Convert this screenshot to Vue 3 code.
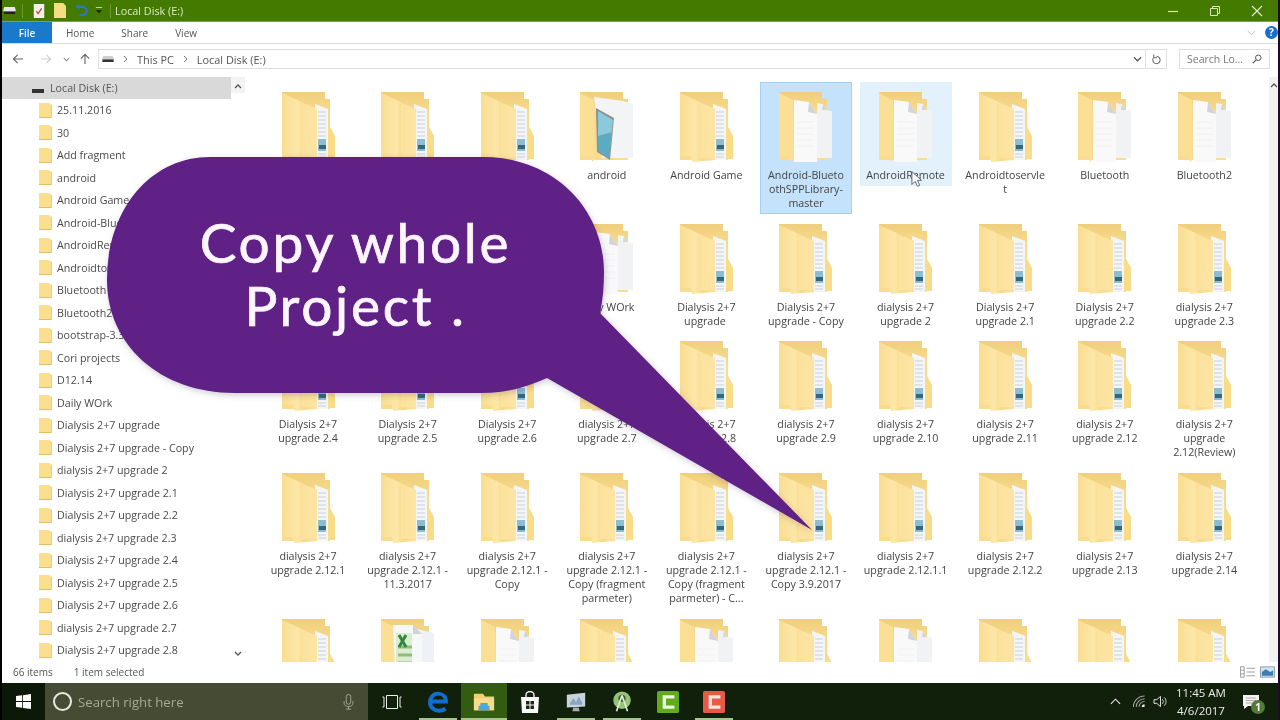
<script setup>
const navItems = ['25.11.2016','30','Add fragment','android','Android Game','Android-BluetoothSPPLibrary-master','AndroidRemote','Androidtoservlet','Bluetooth','Bluetooth2','bootstrap-3.3.7','Cori projects','D12.14','Daily WOrk','Dialysis 2+7 upgrade','Dialysis 2+7 upgrade - Copy','dialysis 2+7 upgrade 2','Dialysis 2+7 upgrade 2.1','Dialysis 2+7 upgrade 2.2','dialysis 2+7 upgrade 2.3','Dialysis 2+7 upgrade 2.4','Dialysis 2+7 upgrade 2.5','Dialysis 2+7 upgrade 2.6','dialysis 2+7 upgrade 2.7','Dialysis 2+7 upgrade 2.8']

const d = 'dialysis 2+7\nupgrade '
const D = 'Dialysis 2+7\nupgrade '
const files = [
  { n: '25.11.2016', i: 'plain' }, { n: '30', i: 'plain' }, { n: 'Add fragment', i: 'plain' },
  { n: 'android', i: 'android' }, { n: 'Android Game', i: 'plain' },
  { n: 'Android-Blueto\nothSPPLibrary-\nmaster', i: 'doc', s: 'selected' },
  { n: 'AndroidRemote', i: 'doc', s: 'hover' }, { n: 'Androidtoservle\nt', i: 'plain' },
  { n: 'Bluetooth', i: 'doc' }, { n: 'Bluetooth2', i: 'doc' },

  { n: 'bootstrap-3.3.7', i: 'plain' }, { n: 'Cori projects', i: 'plain' }, { n: 'D12.14', i: 'plain' },
  { n: 'Daily WOrk', i: 'doc' }, { n: D, i: 'plain' }, { n: D + '- Copy', i: 'plain' },
  { n: d + '2', i: 'plain' }, { n: D + '2.1', i: 'plain' }, { n: D + '2.2', i: 'plain' }, { n: d + '2.3', i: 'plain' },

  { n: D + '2.4', i: 'plain' }, { n: D + '2.5', i: 'plain' }, { n: D + '2.6', i: 'plain' },
  { n: d + '2.7', i: 'plain' }, { n: D + '2.8', i: 'plain' }, { n: d + '2.9', i: 'plain' },
  { n: d + '2.10', i: 'plain' }, { n: d + '2.11', i: 'plain' }, { n: d + '2.12', i: 'plain' },
  { n: 'dialysis 2+7\nupgrade\n2.12(Review)', i: 'plain' },

  { n: d + '2.12.1', i: 'plain' }, { n: d + '2.12.1 -\n11.3.2017', i: 'plain' },
  { n: d + '2.12.1 -\nCopy', i: 'plain' },
  { n: d + '2.12.1 -\nCopy (fragment\nparmeter)', i: 'plain' },
  { n: d + '2.12.1 -\nCopy (fragment\nparmeter) - C...', i: 'plain' },
  { n: d + '2.12.1 -\nCopy 3.9.2017', i: 'plain' },
  { n: d + '2.12.1.1', i: 'plain' }, { n: d + '2.12.2', i: 'plain' },
  { n: d + '2.13', i: 'plain' }, { n: d + '2.14', i: 'plain' },

  { n: '', i: 'plain' }, { n: '', i: 'excel' }, { n: '', i: 'doc' }, { n: '', i: 'plain' }, { n: '', i: 'doc' },
  { n: '', i: 'plain' }, { n: '', i: 'doc' }, { n: '', i: 'plain' }, { n: '', i: 'plain' }, { n: '', i: 'plain' }
]
</script>

<template>
  <div class="screen">
    <svg class="defs" width="0" height="0" aria-hidden="true">
      <defs>
        <linearGradient id="leaf" x1="0" y1="0" x2="1" y2="0">
          <stop offset="0" stop-color="#f9dd92" />
          <stop offset="0.45" stop-color="#fde7a8" />
          <stop offset="0.62" stop-color="#f7da8c" />
          <stop offset="1" stop-color="#fce29a" />
        </linearGradient>
        <linearGradient id="tab" x1="0" y1="0" x2="0" y2="1">
          <stop offset="0" stop-color="#efcf7c" />
          <stop offset="0.3" stop-color="#f8da8c" />
          <stop offset="1" stop-color="#f9dc90" />
        </linearGradient>
        <symbol id="folder-plain" viewBox="0 0 53 70">
          <path d="M0 0H43V7H48V68H0Z" fill="url(#tab)" />
          <path d="M46 31L53 44V67H46Z" fill="#f9dc88" />
          <path d="M33 12L46 17V68H33Z" fill="#f4f5f6" />
          <path d="M36 20H44M36 24H44M36 28H44M36 32H44M36 36H44M36 40H44M36 44H44M36 62H44M36 65H44" stroke="#c6d1d9" stroke-width="1.2" />
          <path d="M36 47H44V59H36Z" fill="#8dbdd0" />
          <path d="M37 53H44V57H37Z" fill="#35667c" />
          <path d="M0 1L35 17V68L12 70L11 64H0Z" fill="url(#leaf)" />
          <path d="M14 8L35 17V66H20V12Z" fill="#fde6a6" opacity="0.7" />
        </symbol>
        <symbol id="folder-doc" viewBox="0 0 53 70">
          <path d="M0 0H43V7H48V68H0Z" fill="url(#tab)" />
          <path d="M0 1L14 8V68L12 70L11 64H0Z" fill="#fadf95" />
          <path d="M38 11L44 12L47 18L53 19V66H38Z" fill="#f1f2f4" />
          <path d="M15 8L30 10L38 22V70H15Z" fill="#f9f9fa" />
          <path d="M30 10L38 22L29 20Z" fill="#d2d4d8" />
          <path d="M44 12L47 18H43Z" fill="#d2d4d8" />
          <path d="M18 30H35M18 36H35M18 42H35M18 48H35M18 54H35" stroke="#f0f0f1" />
        </symbol>
        <symbol id="folder-android" viewBox="0 0 53 70">
          <path d="M0 0H43V7H48V68H0Z" fill="url(#tab)" />
          <path d="M0 1L14 8V68L12 70L11 64H0Z" fill="#fadf95" />
          <path d="M14 5L43 9L53 12V66H22Z" fill="#f3f4f6" />
          <path d="M16 16L34 26L30 68L17 60Z" fill="#8f8f8f" />
          <path d="M18 19L33 28L29 66L18 58Z" fill="#8ccadb" />
          <path d="M18 44L32 40L29 66L18 58Z" fill="#5cabc0" />
        </symbol>
        <symbol id="folder-excel" viewBox="0 0 53 70">
          <path d="M0 0H43V7H48V68H0Z" fill="url(#tab)" />
          <path d="M0 1L14 8V68L12 70L11 64H0Z" fill="#fadf95" />
          <path d="M36 10L53 14V66H36Z" fill="#eef1f5" />
          <path d="M12 6L32 6L41 15V70H15Z" fill="#f6f7f7" />
          <path d="M32 6L41 15H32Z" fill="#cfd3d7" />
          <path d="M15 14H31V62H15Z" fill="#dcecd2" />
          <path d="M17 28H31M17 36H31M17 44H31" stroke="#8fbd7c" stroke-width="3" />
          <path d="M18 16L25 28M25 16L18 28" stroke="#2f8a3c" stroke-width="3" />
        </symbol>
      </defs>
    </svg>

    <header class="titlebar">
      <svg class="qa drive" viewBox="0 0 14 8"><path d="M1 0H13L14 3V8H0V3Z" fill="#e8e8e8" /><path d="M0 5H14V8H0Z" fill="#222" /></svg>
      <span class="qsep"></span>
      <svg class="qa check" viewBox="0 0 12 16"><path d="M0 0H12V16H0Z" fill="#f3f1e8" /><path d="M3 8L5 11L9 5" stroke="#d0413a" stroke-width="1.4" fill="none" /></svg>
      <svg class="qa mini-folder" viewBox="0 0 13 16"><path d="M0 0H10L13 3V16H0Z" fill="#f7dc86" /></svg>
      <svg class="qa undo" viewBox="0 0 14 14"><path d="M3 3H8A4.500 4.500 0 0 1 8 12H5" stroke="#2a78c7" stroke-width="2.500" fill="none" /><path d="M0 3L5 0V6Z" fill="#2a78c7" /></svg>
      <svg class="qa drop" viewBox="0 0 9 7"><path d="M1 0H8" stroke="#e6efd9" /><path d="M1 3H8L4.500 7Z" fill="#1b2a08" /></svg>
      <span class="qsep second"></span>
      <span class="title-text">Local Disk (E:)</span>
      <div class="winctl">
        <svg viewBox="0 0 12 12"><path d="M1 6.500H11" stroke="#cfe6b0" stroke-width="1.200" /></svg>
        <svg viewBox="0 0 12 12"><path d="M1.500 3.500H8.500V10.500H1.500ZM3.500 3.500V1.500H10.500V8.500H8.500" stroke="#d8e8c0" fill="none" /></svg>
        <svg viewBox="0 0 12 12"><path d="M1 1L11 11M11 1L1 11" stroke="#e4efd4" stroke-width="1.100" /></svg>
      </div>
    </header>

    <nav class="ribbon">
      <span class="tab file">File</span>
      <span class="tab home">Home</span>
      <span class="tab">Share</span>
      <span class="tab">View</span>
      <svg class="rib-chev" viewBox="0 0 10 6"><path d="M1 1L5 5L9 1" stroke="#b5b5b5" fill="none" /></svg>
      <span class="help">?</span>
    </nav>

    <div class="addressbar">
      <svg class="nav-arrow back" viewBox="0 0 14 12"><path d="M13 6H2M6.500 1L1.500 6L6.500 11" stroke="#666" stroke-width="1.400" fill="none" /></svg>
      <svg class="nav-arrow fwd" viewBox="0 0 14 12"><path d="M1 6H12M7.500 1L12.500 6L7.500 11" stroke="#cfcfcf" stroke-width="1.400" fill="none" /></svg>
      <svg class="nav-arrow down" viewBox="0 0 8 5"><path d="M1 1L4 4L7 1" stroke="#888" stroke-width="1.200" fill="none" /></svg>
      <svg class="nav-arrow up" viewBox="0 0 12 14"><path d="M6 13V2M1 6.500L6 1.500L11 6.500" stroke="#666" stroke-width="1.400" fill="none" /></svg>
      <div class="address">
        <svg class="addr-drive" viewBox="0 0 13 7"><path d="M1 0H12L13 3V7H0V3Z" fill="#cfcfcf" /><path d="M0 4H13V7H0Z" fill="#333" /></svg>
        <svg class="crumb" viewBox="0 0 5 8"><path d="M1 1L4 4L1 7" stroke="#777" fill="none" /></svg>
        <span>This PC</span>
        <svg class="crumb" viewBox="0 0 5 8"><path d="M1 1L4 4L1 7" stroke="#777" fill="none" /></svg>
        <span>Local Disk (E:)</span>
        <svg class="addr-drop" viewBox="0 0 10 6"><path d="M1 1L5 5L9 1" stroke="#555" stroke-width="1.400" fill="none" /></svg>
        <span class="refresh">
          <svg viewBox="0 0 12 12"><path d="M6 2.500A4 4 0 1 1 2.500 4.500" stroke="#666" stroke-width="1.100" fill="none" /><path d="M3 0.500V4H6.500" stroke="#666" stroke-width="1.100" fill="none" /></svg>
        </span>
      </div>
      <div class="search">
        <span>Search Lo...</span>
        <svg viewBox="0 0 12 12"><circle cx="7.500" cy="4.500" r="3.300" stroke="#555" stroke-width="1.200" fill="none" /><path d="M5 7L1 11" stroke="#555" stroke-width="1.500" /></svg>
      </div>
    </div>

    <main class="body">
      <aside class="tree">
        <div class="tree-list">
          <div class="tree-root">
            <svg viewBox="0 0 12 5"><path d="M0 1H12V5H0Z" fill="#333" /></svg>
            <span>Local Disk (E:)</span>
          </div>
          <div v-for="name in navItems" :key="name" class="tree-row">
            <svg viewBox="0 0 13 15"><path d="M0 0H10L13 2V15H0Z" fill="#fbdf8e" /><path d="M12.500 2V15H0V14H12V2Z" fill="#e3bd63" /></svg>
            <span class="tree-name">{{ name }}</span>
          </div>
        </div>
        <div class="vscroll">
          <svg viewBox="0 0 8 5"><path d="M1 4L4 1L7 4" stroke="#555" stroke-width="1.300" fill="none" /></svg>
          <svg viewBox="0 0 8 5"><path d="M1 1L4 4L7 1" stroke="#555" stroke-width="1.300" fill="none" /></svg>
        </div>
      </aside>

      <section class="files">
        <div class="grid">
          <div v-for="(f, idx) in files" :key="idx" class="item" :class="f.s">
            <svg class="folder" viewBox="0 0 53 70"><use :href="'#folder-' + f.i" /></svg>
            <div class="label">{{ f.n }}</div>
          </div>
        </div>
        <div class="rscroll">
          <svg viewBox="0 0 8 5"><path d="M1 4L4 1L7 4" stroke="#555" stroke-width="1.300" fill="none" /></svg>
        </div>
      </section>
    </main>

    <footer class="status">
      <span>66 items</span>
      <span class="sel">1 item selected</span>
      <div class="views">
        <svg viewBox="0 0 16 12"><path d="M0.500 0.500H4.500V11.500H0.500ZM0.500 4H4.500M0.500 8H4.500M7 2H16M7 6H16M7 10H16" stroke="#9a9a9a" fill="none" /></svg>
        <svg viewBox="0 0 16 12"><path d="M0.500 0.500H15.500V11.500H0.500Z" fill="#cfe3f5" stroke="#8a9aa8" /><path d="M2 6L6 3L11 6L14 4V10H2Z" fill="#3d7db0" /></svg>
      </div>
    </footer>

    <div class="taskbar">
      <div class="start">
        <svg viewBox="0 0 16 16"><path d="M0 2.200L6.600 1.300V7.500H0ZM7.500 1.200L16 0V7.500H7.500ZM0 8.500H6.600V14.700L0 13.800ZM7.500 8.500H16V16L7.500 14.800Z" fill="#fff" /></svg>
      </div>
      <div class="cortana">
        <span class="ring"></span>
        <span class="ctext">Search right here</span>
        <svg class="mic" viewBox="0 0 12 18"><rect x="3.500" y="0.500" width="5" height="11" rx="2.500" stroke="#a8ab98" fill="none" /><path d="M1 8V10A5 4 0 0 0 11 10V8M6 14V17M3 17H9" stroke="#a8ab98" fill="none" /></svg>
      </div>
      <div class="tb-btn taskview">
        <svg viewBox="0 0 20 14"><path d="M4.500 0.500H15.500V13.500H4.500ZM2 2V12H0.500M18 2V12H19.500M0.500 2H2M18 2H19.500" stroke="#eee" stroke-width="1" fill="none" /></svg>
      </div>
      <div class="tb-btn on-line">
        <svg viewBox="0 0 24 25"><path d="M3 12H21C21 6 17 3 12 3C6 3 3 8 3 13C3 19 8 22.500 13 22.500C16 22.500 18.500 21.500 20.500 20" stroke="#0f6fd0" stroke-width="4.500" fill="none" /></svg>
      </div>
      <div class="tb-btn active on-line">
        <svg viewBox="0 0 24 20"><path d="M1 1H11L13 4H23V19H1Z" fill="#f3cf72" /><path d="M1 6H23V19H1Z" fill="#f8dc8c" /><path d="M8 11H16V14H18V19H6V14H8Z" fill="#4fa8cf" /></svg>
      </div>
      <div class="tb-btn">
        <svg viewBox="0 0 20 22"><path d="M1 6H19L18 22H2Z" fill="#f8f8f8" /><path d="M6 6V4A4 3.500 0 0 1 14 4V6" stroke="#f4f4f4" stroke-width="1.400" fill="none" /><path d="M6 10H9.500V13.500H6ZM10.500 10H14V13.500H10.500ZM6 14.500H9.500V18H6ZM10.500 14.500H14V18H10.500Z" fill="#1c2a14" /></svg>
      </div>
      <div class="tb-btn on-line">
        <svg viewBox="0 0 24 22"><path d="M2 3L22 1V16L2 17Z" fill="#c9d3dc" /><path d="M5 13L9 7L12 11L15 5L19 12V14H5Z" fill="#86a6c4" /><path d="M9 17L15 17L16 21H8Z" fill="#a4acb2" /></svg>
      </div>
      <div class="tb-btn on-line">
        <svg viewBox="0 0 20 24"><circle cx="10" cy="10" r="9.500" fill="#93c47a" /><circle cx="10" cy="8" r="4" fill="#3b5f34" /><path d="M10 5L4 22M10 5L16 22" stroke="#e6ead8" stroke-width="1.800" fill="none" /></svg>
      </div>
      <div class="tb-btn">
        <svg viewBox="0 0 24 24"><rect width="24" height="24" rx="2" fill="#62ab1c" /><path d="M19 6.500H8V17.500H19" stroke="#eef5e4" stroke-width="3.600" fill="none" /></svg>
      </div>
      <div class="tb-btn on-line">
        <svg viewBox="0 0 24 24"><rect width="24" height="24" rx="2" fill="#e85a48" /><path d="M19 6.500H8V17.500H19" stroke="#f8e4dc" stroke-width="3.600" fill="none" /></svg>
      </div>
      <div class="tray">
        <svg class="t-up" viewBox="0 0 12 7"><path d="M1 6L6 1L11 6" stroke="#e8e8e8" stroke-width="1.200" fill="none" /></svg>
        <svg class="t-wifi" viewBox="0 0 14 14"><path d="M1 13A12 12 0 0 1 13 1M4 13A9 9 0 0 1 13 4M7 13A6 6 0 0 1 13 7" stroke="#9fa59a" stroke-width="1.100" fill="none" /><path d="M10 13A3 3 0 0 1 13 10V13Z" fill="#eee" /></svg>
        <svg class="t-vol" viewBox="0 0 16 14"><path d="M1 5H4L8 1.500V12.500L4 9H1Z" stroke="#eee" fill="none" /><path d="M10 4.500A3.500 3.500 0 0 1 10 9.500M12 2.500A6 6 0 0 1 12 11.500" stroke="#ddd" fill="none" /></svg>
        <div class="clock"><span>11:45 AM</span><span>4/6/2017</span></div>
        <div class="notif">
          <svg viewBox="0 0 16 14"><path d="M0 0H16V11H5L1 14V11H0Z" fill="#f2f2f2" /><path d="M3 3H13M3 5.500H13M3 8H10" stroke="#999" stroke-width="0.800" /></svg>
          <span class="badge">1</span>
        </div>
      </div>
    </div>

    <div class="callout">
      <svg class="bubble" viewBox="107 157 705 373" aria-hidden="true">
        <path d="M210 157H483C555 157 604 210 604 272C604 285 603 300 600 313L812 530L547 378C525 388 505 393 480 393H235C160 393 107 345 107 280C107 210 150 157 210 157Z" fill="#5f2185" />
      </svg>
      <div class="callout-text">
        <span>Copy whole</span>
        <span>Project .</span>
      </div>
    </div>

    <svg class="cursor" viewBox="0 0 12 18"><path d="M1 1V15L4.500 11.500L7 17L9.500 16L7 10.500H11.500Z" fill="#fff" stroke="#54606c" stroke-width="1" /></svg>
  </div>
</template>

<style scoped>
.screen {
  position: relative;
  width: 1280px;
  height: 720px;
  box-sizing: border-box;
  border-left: 2px solid #000;
  border-right: 2px solid #1c0c2a;
  background: #fff;
  display: flex;
  flex-direction: column;
  overflow: hidden;
  font-family: "Open Sans", "Noto Sans", sans-serif;
  font-size: 10.7px;
  color: #444;
  filter: blur(0.35px);
}
.defs { position: absolute; }

.titlebar {
  height: 22px;
  flex: none;
  background: #447a00;
  display: flex;
  align-items: center;
  box-sizing: border-box;
  border-bottom: 1px solid #7aa54a;
}
.qa { display: block; flex: none; }
.drive { width: 13px; height: 7px; margin-left: 1px; }
.qsep { width: 1px; height: 14px; background: #6d9a36; margin-left: 6px; }
.check { width: 12px; height: 14px; margin-left: 10px; }
.mini-folder { width: 12px; height: 15px; margin-left: 9px; }
.undo { width: 13px; height: 13px; margin-left: 9px; }
.drop { width: 8px; height: 7px; margin-left: 7px; }
.qsep.second { margin-left: 7px; }
.title-text { margin-left: 4px; color: #dcebc4; font-size: 10.8px; }
.winctl { margin-left: auto; display: flex; align-items: center; margin-right: 15px; gap: 30px; }
.winctl svg { width: 12px; height: 12px; display: block; }

.ribbon {
  height: 22px;
  flex: none;
  box-sizing: border-box;
  border-bottom: 1px solid #dcdcdc;
  display: flex;
  align-items: center;
  gap: 27px;
  position: relative;
}
.tab { color: #555; font-size: 10px; }
.tab.file {
  width: 50px;
  height: 21px;
  background: #1979ca;
  color: #e8f3fb;
  font-weight: 600;
  display: flex;
  align-items: center;
  justify-content: center;
  margin-right: -13px;
}
.rib-chev { width: 9px; height: 6px; margin-left: auto; }
.help {
  width: 13px;
  height: 13px;
  border-radius: 50%;
  background: #1a6fc9;
  color: #fff;
  font-size: 10px;
  font-weight: 700;
  line-height: 13px;
  text-align: center;
  margin-left: -18px;
}

.addressbar {
  height: 33px;
  flex: none;
  box-sizing: border-box;
  padding-bottom: 3px;
  display: flex;
  align-items: center;
  position: relative;
}
.nav-arrow { display: block; flex: none; }
.back { width: 12px; height: 10px; margin-left: 10px; }
.fwd { width: 12px; height: 10px; margin-left: 16px; }
.down { width: 7px; height: 5px; margin-left: 11px; }
.up { width: 10px; height: 12px; margin-left: 10px; }
.address {
  margin-left: 8px;
  width: 1069px;
  height: 20px;
  box-sizing: border-box;
  border: 1px solid #dedede;
  display: flex;
  align-items: center;
  color: #555;
  font-size: 10.9px;
}
.addr-drive { width: 12px; height: 6px; margin-left: 3px; flex: none; }
.crumb { width: 5px; height: 8px; margin: 0 9px; flex: none; }
.crumb + span { white-space: nowrap; }
.addr-drop { width: 9px; height: 6px; margin-left: auto; margin-right: 3px; }
.refresh {
  width: 20px;
  height: 18px;
  border-left: 1px solid #dedede;
  display: flex;
  align-items: center;
  justify-content: center;
}
.refresh svg { width: 11px; height: 11px; }
.search {
  margin-left: 12px;
  width: 91px;
  height: 20px;
  box-sizing: border-box;
  border: 1px solid #dedede;
  display: flex;
  align-items: center;
  justify-content: space-between;
  padding: 0 7px;
  color: #777;
  font-size: 10.5px;
}
.search svg { width: 10px; height: 10px; }

.body {
  flex: 1;
  min-height: 0;
  display: flex;
}
.tree {
  width: 243px;
  flex: none;
  display: flex;
  overflow: hidden;
}
.tree-list { width: 229px; flex: none; overflow: hidden; }
.tree-root {
  height: 22px;
  background: #d9d9d9;
  display: flex;
  align-items: center;
  padding-left: 30px;
  gap: 6px;
  color: #555;
}
.tree-root svg { width: 12px; height: 5px; margin-top: 5px; }
.tree-row {
  height: 22.5px;
  display: flex;
  align-items: center;
  padding-left: 37px;
  gap: 5px;
  white-space: nowrap;
  color: #4a4a4a;
}
.tree-row svg { width: 13px; height: 15px; flex: none; }
.tree-name { min-width: 0; overflow: hidden; text-overflow: ellipsis; }
.vscroll {
  width: 14px;
  display: flex;
  flex-direction: column;
  justify-content: space-between;
  align-items: center;
  padding: 7px 0 6px;
  background: linear-gradient(#f3f3f3 0 16px, #fff 16px);
}
.vscroll svg { width: 8px; height: 5px; }

.files {
  flex: 1;
  min-width: 0;
  position: relative;
  overflow: hidden;
}
.grid {
  display: grid;
  grid-template-columns: repeat(10, 92px);
  column-gap: 7.6px;
  row-gap: 0;
  align-items: start;
  padding: 5px 0 0 17px;
}
.item {
  box-sizing: border-box;
  display: flex;
  flex-direction: column;
  align-items: center;
  padding-top: 10px;
  padding-bottom: 3.7px;
  min-width: 0;
}
.folder { width: 53px; height: 70px; display: block; flex: none; margin-bottom: 6px; }
.label {
  white-space: pre;
  text-align: center;
  line-height: 14px;
  color: #444;
}
.item.selected { background: #c4e2fb; box-shadow: inset 0 0 0 1px #a4d0f2; }
.item.hover { background: #e3f1fd; }
.rscroll {
  position: absolute;
  right: 0;
  top: 0;
  bottom: 0;
  width: 9px;
  background: #f2f2f2;
  display: flex;
  justify-content: center;
  padding-top: 6px;
  box-sizing: border-box;
}
.rscroll svg { width: 8px; height: 5px; }

.status {
  height: 21px;
  flex: none;
  box-sizing: border-box;
  padding: 0 0 2px 11px;
  display: flex;
  align-items: center;
  color: #555;
  font-size: 10px;
}
.status .sel { margin-left: 21px; }
.views { margin-left: auto; display: flex; gap: 5px; margin-right: 3px; }
.views svg { width: 15px; height: 12px; }

.taskbar {
  height: 37px;
  flex: none;
  background: #10200b;
  display: flex;
  align-items: stretch;
  position: relative;
}
.start {
  width: 43px;
  background: #0c1907;
  display: flex;
  align-items: center;
  justify-content: center;
}
.start svg { width: 15px; height: 15px; }
.cortana {
  width: 323px;
  background: #454c33;
  display: flex;
  align-items: center;
  box-sizing: border-box;
  padding-left: 8px;
}
.ring {
  width: 15px;
  height: 15px;
  border: 2.5px solid #e8e8e0;
  border-radius: 50%;
  flex: none;
}
.ctext { margin-left: 6px; color: #a7ab93; font-size: 13.2px; }
.mic { width: 11px; height: 16px; margin-left: auto; margin-right: 14px; }
.tb-btn {
  width: 46px;
  display: flex;
  align-items: center;
  justify-content: center;
  flex: none;
  position: relative;
}
.tb-btn svg { width: 22px; height: 22px; }
.taskview { width: 47px; }
.taskview svg { width: 20px; height: 14px; }
.tb-btn.active { background: #335c10; }
.on-line::after {
  content: "";
  position: absolute;
  left: 4px;
  right: 4px;
  bottom: 0;
  height: 2px;
  background: #a9c48f;
}
.tb-btn.active::after { left: 0; right: 0; }
.tray {
  margin-left: auto;
  display: flex;
  align-items: center;
  color: #eee;
}
.t-up { width: 11px; height: 7px; }
.t-wifi { width: 14px; height: 13px; margin-left: 11px; }
.t-vol { width: 15px; height: 13px; margin-left: 7px; }
.clock {
  display: flex;
  flex-direction: column;
  align-items: center;
  font-size: 11.5px;
  line-height: 18px;
  margin-left: 2px;
  width: 62px;
  color: #ececec;
}
.notif { position: relative; width: 20px; margin-left: 11px; margin-right: 15px; }
.notif svg { width: 16px; height: 14px; display: block; }
.badge {
  position: absolute;
  left: 8px;
  top: 5px;
  width: 14px;
  height: 14px;
  border-radius: 50%;
  background: #547a38;
  color: #fff;
  font-size: 10px;
  font-weight: 700;
  line-height: 14px;
  text-align: center;
}

.callout {
  position: absolute;
  left: 105px;
  top: 157px;
  width: 497px;
  height: 236px;
  display: flex;
  align-items: center;
  justify-content: center;
}
.bubble {
  position: absolute;
  left: 0;
  top: 0;
  width: 705px;
  height: 373px;
  filter: drop-shadow(1px 2px 3px rgba(60, 40, 80, 0.25));
}
.callout-text {
  position: relative;
  display: flex;
  flex-direction: column;
  align-items: center;
  color: #fdf6ff;
  font-family: "Lato", sans-serif;
  font-size: 55px;
  line-height: 63px;
  letter-spacing: 2.700px;
  -webkit-text-stroke: 0.7px #fdf6ff;
  margin-top: -2px;
}
.cursor {
  position: absolute;
  left: 909px;
  top: 170px;
  width: 11px;
  height: 18px;
}
</style>
